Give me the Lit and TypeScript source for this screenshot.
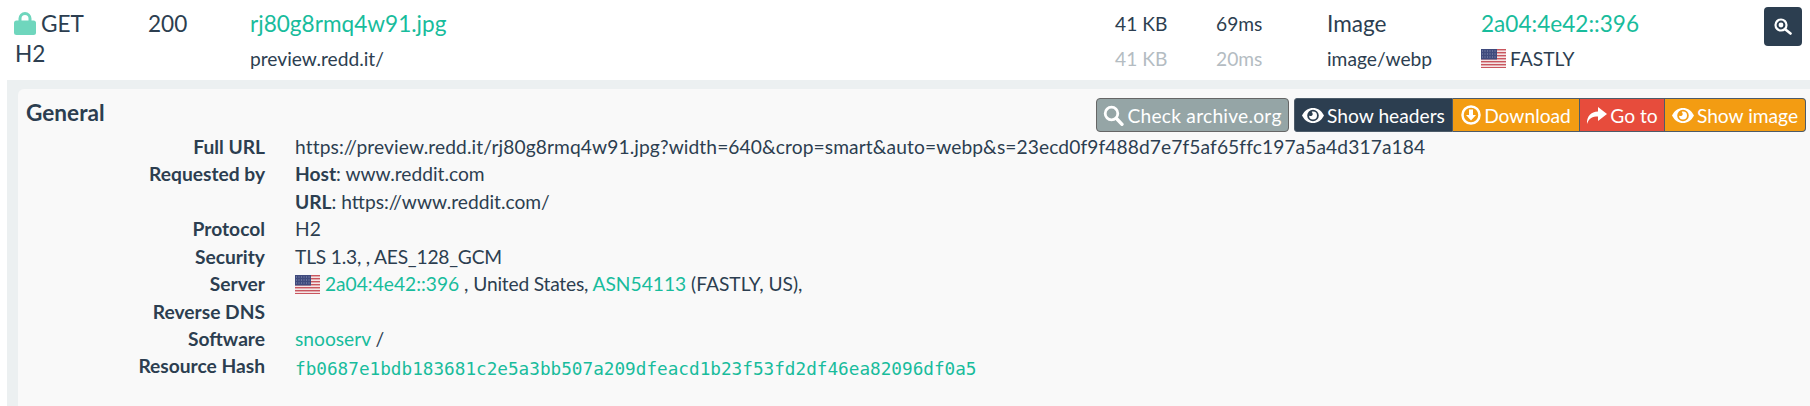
import { LitElement, html, css, svg } from 'lit';
import { customElement } from 'lit/decorators.js';

const flag = html`<svg class="flag" width="25" height="19" viewBox="0 0 25 19">
  <rect width="25" height="19" fill="#f4e4e4"/>
  ${[0, 3, 6, 9, 12, 15, 18].map((y) => svg`<rect y=${y} width="25" height="1.4" fill="#c9565f"/>`)}
  <rect width="16" height="10.500" fill="#3f4a7d"/>
  ${[2, 5, 8].map((y) => svg`<path d="M1 ${y}H15" stroke="#8d94b6" stroke-width="1" stroke-dasharray="1 1.500"/>`)}
</svg>`;

const lock = html`<svg class="lock" width="22" height="23" viewBox="0 0 22 23">
  <path d="M6 11V6.500a5 5 0 0 1 10 0V11" fill="none" stroke="#6fd6bd" stroke-width="3"/>
  <rect x="0" y="8.500" width="22" height="14.500" rx="2.500" fill="#6fd6bd"/>
</svg>`;

const searchIcon = html`<svg width="21" height="21" viewBox="0 0 21 21">
  <circle cx="8.500" cy="8.500" r="6.300" fill="none" stroke="#fff" stroke-width="2.800"/>
  <path d="M13.500 13.500 19 19.300" stroke="#fff" stroke-width="3.400" stroke-linecap="round"/>
</svg>`;

const zoomIcon = html`<svg width="18" height="17" viewBox="0 0 18 17">
  <circle cx="7" cy="7" r="5.500" fill="none" stroke="#fff" stroke-width="2.200"/>
  <circle cx="7" cy="7" r="2.400" fill="#fff"/>
  <path d="M11.500 11.500 16.500 15.500" stroke="#fff" stroke-width="2.600" stroke-linecap="round"/>
</svg>`;

const eye = html`<svg width="22" height="17" viewBox="0 0 22 17">
  <path fill-rule="evenodd" fill="#fff" d="M0 8.500C2.800 3.200 6.600 1 11 1s8.200 2.200 11 7.500C19.200 13.800 15.400 16 11 16S2.800 13.800 0 8.500Zm11-5.800a5.800 5.800 0 1 0 0 11.600 5.800 5.800 0 0 0 0-11.600Z"/>
  <path fill="#fff" d="M11 4.500a4 4 0 1 1-4 4c.9.900 3.100.700 3.600-.7.300-1-.2-2.200-1-2.900.4-.2.900-.4 1.400-.4Z"/>
</svg>`;

const download = html`<svg width="20" height="20" viewBox="0 0 20 20">
  <circle cx="10" cy="10" r="8.500" fill="none" stroke="#fff" stroke-width="2.500"/>
  <path fill="#fff" d="M8 4.500h4v5.500h3L10 15.500 5 10h3Z"/>
</svg>`;

const share = html`<svg width="21" height="19" viewBox="0 0 21 19">
  <path fill="#fff" d="M12 1 21 8 12 15v-4.500C6.500 10.500 3 12 1 18 .5 10.500 5 5.500 12 5.500Z"/>
</svg>`;

const rows = [
  ['Full URL', html`<span class="url">https://preview.redd.it/rj80g8rmq4w91.jpg?width=640&crop=smart&auto=webp&s=23ecd0f9f488d7e7f5af65ffc197a5a4d317a184</span>`],
  ['Requested by', html`<b>Host</b>: www.reddit.com`],
  ['', html`<b>URL</b>: https://www.reddit.com/`],
  ['Protocol', html`H2`],
  ['Security', html`<span class="tight">TLS 1.3, , AES_128_GCM</span>`],
  ['Server', html`${flag} <a>2a04:4e42::396</a> , <span class="states">United States,</span> <a>ASN54113</a> (FASTLY, US),`],
  ['Reverse DNS', html``],
  ['Software', html`<a>snooserv</a> /`],
  ['Resource Hash', html`<a class="mono">fb0687e1bdb183681c2e5a3bb507a209dfeacd1b23f53fd2df46ea82096df0a5</a>`],
];

@customElement('app-root')
export class AppRoot extends LitElement {
  static styles = css`
    :host {
      display: block;
      width: 1810px;
      height: 406px;
      overflow: hidden;
      background: #fff;
      color: #2c3e50;
      font-family: Lato, sans-serif;
      font-size: 19.200px;
    }
    a { color: #18bc9c; }
    .entry {
      display: grid;
      grid-template-columns: 133px 102px 865px 101px 111px 154px 283px 1fr;
      grid-template-rows: 46px 24px;
      height: 80px;
      padding-left: 15px;
      box-sizing: border-box;
      align-items: center;
    }
    .big { font-size: 22.600px; }
    .method { grid-row: 1 / 3; align-self: start; font-size: 22.600px; }
    .method .top { display: flex; align-items: center; gap: 5px; margin: 10px 0 0 -1px; line-height: 28px; }
    .method .proto { display: block; line-height: 32px; }
    .lock { margin-top: -2px; }
    .muted { color: #b4bcc2; }
    .col3 { grid-column: 3; grid-row: 2; }
    .col4 { grid-column: 4; grid-row: 2; }
    .col5 { grid-column: 5; grid-row: 2; }
    .col6 { grid-column: 6; grid-row: 2; }
    .asn { grid-column: 7; grid-row: 2; display: flex; align-items: center; gap: 4px; }
    .zoom {
      grid-column: 8;
      grid-row: 1 / 3;
      align-self: start;
      margin-top: 7px;
      width: 38px;
      height: 39px;
      border-radius: 4px;
      background: #2c3e50;
      display: flex;
      align-items: center;
      justify-content: center;
    }
    .band {
      height: 326px;
      box-sizing: border-box;
      margin-left: 7px;
      padding: 9px 0 0 11px;
      background: #ecf0f1;
    }
    .card {
      height: 100%;
      background: #f9f9f9;
      border-radius: 6px 0 0 0;
      padding: 9px 4px 0 8px;
      box-sizing: border-box;
    }
    .head { display: flex; justify-content: space-between; align-items: flex-start; height: 34px; }
    h4 { margin: 0; padding-top: 1px; font-size: 22.600px; line-height: 28px; font-weight: 700; }
    .btns { display: flex; gap: 5px; }
    .group { display: flex; }
    .btn {
      display: flex;
      align-items: center;
      justify-content: center;
      gap: 3px;
      height: 34px;
      box-sizing: border-box;
      color: #fff;
      border: 1px solid #4d5b69;
      border-left-width: 0;
    }
    .group .btn:first-child { border-left-width: 1px; border-radius: 3px 0 0 3px; }
    .group .btn:last-child { border-radius: 0 4px 4px 0; }
    .gray { width: 193px; background: #95a5a6; border: 1px solid #666; border-radius: 4px; letter-spacing: 0.250px; }
    .dark { width: 159px; background: #2c3e50; }
    .dl { width: 127px; background: #f39c12; }
    .red { width: 85px; background: #e74c3c; }
    .img { width: 141px; background: #f39c12; }
    .table {
      display: grid;
      grid-template-columns: 239px 1fr;
      column-gap: 30px;
      margin-top: 1px;
      line-height: 27.430px;
    }
    .label { text-align: right; font-weight: 700; height: 27.430px; }
    .value { white-space: nowrap; height: 27.430px; }
    .url { letter-spacing: 0.100px; }
    .tight { letter-spacing: -0.200px; }
    .states { letter-spacing: -0.200px; }
    .flag { vertical-align: -3px; }
    .mono { font-family: 'DejaVu Sans Mono', monospace; font-size: 17.700px; vertical-align: -2px; }
  `;

  render() {
    return html`
      <div class="entry">
        <div class="method">
          <div class="top">${lock} GET</div>
          <div class="proto">H2</div>
        </div>
        <div class="big">200</div>
        <a class="big">rj80g8rmq4w91.jpg</a>
        <div>41 KB</div>
        <div>69ms</div>
        <div class="big">Image</div>
        <a class="big">2a04:4e42::396</a>
        <div class="zoom">${zoomIcon}</div>
        <div class="col3">preview.redd.it/</div>
        <div class="muted col4">41 KB</div>
        <div class="muted col5">20ms</div>
        <div class="col6">image/webp</div>
        <div class="asn">${flag} FASTLY</div>
      </div>
      <div class="band">
        <div class="card">
          <div class="head">
            <h4>General</h4>
            <div class="btns">
              <div class="btn gray">${searchIcon} Check archive.org</div>
              <div class="group">
                <div class="btn dark">${eye} Show headers</div>
                <div class="btn dl">${download} Download</div>
                <div class="btn red">${share} Go to</div>
                <div class="btn img">${eye} Show image</div>
              </div>
            </div>
          </div>
          <div class="table">
            ${rows.map(([k, v]) => html`<div class="label">${k}</div><div class="value">${v}</div>`)}
          </div>
        </div>
      </div>
    `;
  }
}
